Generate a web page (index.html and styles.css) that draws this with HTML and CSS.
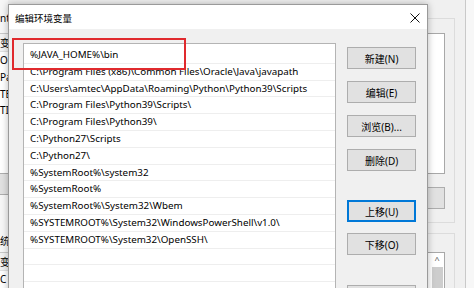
FILE: index.html
```html
<!DOCTYPE html>
<html lang="zh-CN">
<head>
    <meta charset="UTF-8">
    <meta name="viewport" content="width=device-width, initial-scale=1.0">
    <title>编辑环境变量</title>
    <link rel="stylesheet" href="styles.css">
</head>
<body>

<div class="desk">
    <!-- background window, left edge -->
    <div class="bg-left">
        <div class="bl-top">nt</div>
        <div class="bl-list">
            <div class="bl-head">变</div>
            <div class="bl-row">O</div>
            <div class="bl-row">Pa</div>
            <div class="bl-row">TE</div>
            <div class="bl-row">TI</div>
        </div>
        <div class="bl-btn"></div>
        <div class="bl-label">统</div>
        <div class="bl-list bl-list2">
            <div class="bl-head">变</div>
            <div class="bl-row">C</div>
        </div>
    </div>

    <!-- the dialog -->
    <div class="dialog">
        <div class="titlebar">
            <span class="title">编辑环境变量</span>
            <svg class="close" width="10" height="10" viewBox="0 0 10 10">
                <path d="M0.5 0.5 L9.5 9.5 M9.5 0.5 L0.5 9.5" stroke="#111" stroke-width="1" fill="none"/>
            </svg>
        </div>
        <div class="content">
            <div class="list" id="pathList"></div>
            <div class="buttons">
                <div class="btn-group">
                    <div class="btn">新建(N)</div>
                    <div class="btn">编辑(E)</div>
                    <div class="btn">浏览(B)...</div>
                    <div class="btn">删除(D)</div>
                </div>
                <div class="btn-group group-move">
                    <div class="btn focused">上移(U)</div>
                    <div class="btn">下移(O)</div>
                </div>
                <div class="btn-group group-text">
                    <div class="btn">编辑文本(T)...</div>
                </div>
            </div>
        </div>
    </div>

    <!-- background window, right edge -->
    <div class="bg-right">
        <div class="br-main">
            <div class="frame frame1">
                <div class="br-list"></div>
                <div class="br-btn"></div>
            </div>
            <div class="frame frame2">
                <div class="br-scroll">
                    <span class="arrow">^</span>
                    <div class="thumb"></div>
                </div>
            </div>
        </div>
        <div class="br-edge"></div>
    </div>

    <div class="mark"></div>
</div>

<script>
    const paths = [
        "%JAVA_HOME%\\bin",
        "C:\\Program Files (x86)\\Common Files\\Oracle\\Java\\javapath",
        "C:\\Users\\amtec\\AppData\\Roaming\\Python\\Python39\\Scripts",
        "C:\\Program Files\\Python39\\Scripts\\",
        "C:\\Program Files\\Python39\\",
        "C:\\Python27\\Scripts",
        "C:\\Python27\\",
        "%SystemRoot%\\system32",
        "%SystemRoot%",
        "%SystemRoot%\\System32\\Wbem",
        "%SYSTEMROOT%\\System32\\WindowsPowerShell\\v1.0\\",
        "%SYSTEMROOT%\\System32\\OpenSSH\\",
        "", "", ""
    ];

    const list = document.getElementById("pathList");
    paths.forEach(p => {
        const row = document.createElement("div");
        row.className = "row";
        row.textContent = p;
        list.appendChild(row);
    });
</script>

</body>
</html>
```

FILE: styles.css
```css
body {
    margin: 0;
    padding: 0;
    font-family: 'Noto Sans', 'Noto Sans CJK SC', sans-serif;
    color: #000;
    background-color: #f0f0f0;
}
.desk {
    position: relative;
    display: flex;
    width: 474px;
    height: 288px;
    overflow: hidden;
}

/* left strip of the window behind */
.bg-left {
    width: 8px;
    flex-shrink: 0;
    overflow: hidden;
    background-color: #f7f7f7;
    font-size: 10px;
    white-space: nowrap;
}
.bl-top {
    height: 33px;
    line-height: 36px;
    text-align: right;
}
.bl-list {
    height: 139px;
    background-color: #fff;
    border-top: 1px solid #c8c8c8;
}
.bl-head {
    height: 17px;
    line-height: 18px;
    background-color: #f2f2f2;
    border-bottom: 1px solid #e0e0e0;
    font-family: 'Noto Sans CJK SC', sans-serif;
    font-size: 10px;
}
.bl-row {
    height: 16.8px;
    line-height: 16.8px;
}
.bl-btn {
    height: 20px;
    background-color: #e1e1e1;
    border-top: 1px solid #adadad;
    border-bottom: 1px solid #adadad;
}
.bl-label {
    height: 57px;
    line-height: 32px;
    padding-top: 30px;
    box-sizing: border-box;
    font-family: 'Noto Sans CJK SC', sans-serif;
    font-size: 10px;
}
.bl-list2 {
    height: 40px;
}

/* dialog */
.dialog {
    position: relative;
    z-index: 1;
    width: 420px;
    height: 300px;
    flex-shrink: 0;
    margin-top: 4px;
    box-sizing: border-box;
    border: 1px solid #9a9a9a;
    background-color: #f0f0f0;
    box-shadow: 0 0 7px rgba(0, 0, 0, 0.28);
}
.titlebar {
    height: 24px;
    display: flex;
    justify-content: space-between;
    align-items: center;
    padding: 0 7px 0 6px;
    background-color: #fff;
}
.title {
    font-family: 'Noto Sans CJK SC', sans-serif;
    font-size: 9.5px;
    padding-top: 1px;
}
.close {
    margin-top: 1px;
}
.content {
    display: flex;
    gap: 11px;
    padding: 14px 11px 0 14px;
}
.list {
    width: 314px;
    height: 260px;
    box-sizing: border-box;
    border: 1px solid #b4b4b4;
    background-color: #fff;
    padding-top: 3px;
    font-size: 9.8px;
}
.row {
    height: 16.8px;
    line-height: 16px;
    padding-left: 6px;
    box-sizing: border-box;
    border-bottom: 1px solid #eeeeee;
    white-space: nowrap;
}
.buttons {
    width: 69px;
    padding-top: 4px;
}
.btn-group {
    display: flex;
    flex-direction: column;
    gap: 12px;
}
.group-move {
    margin-top: 29px;
    gap: 11px;
}
.group-text {
    margin-top: 30px;
}
.btn {
    height: 22px;
    box-sizing: border-box;
    border: 1px solid #adadad;
    background-color: #e1e1e1;
    display: flex;
    align-items: center;
    justify-content: center;
    font-size: 10px;
    white-space: nowrap;
}
.btn.focused {
    border-color: #0078d7;
    box-shadow: inset 0 0 0 1px #0078d7;
}

/* right strip of the window behind */
.bg-right {
    flex: 1;
    display: flex;
}
.br-main {
    width: 37px;
    border-right: 1px solid #c9c9c9;
}
.frame {
    width: 27px;
    box-sizing: border-box;
    border-top: 1px solid #dcdcdc;
    border-right: 1px solid #dcdcdc;
}
.frame1 {
    margin-top: 18px;
    height: 205px;
    border-bottom: 1px solid #dcdcdc;
    padding-top: 14px;
}
.frame2 {
    margin-top: 10px;
    height: 60px;
    padding-top: 18px;
}
.br-list {
    width: 17px;
    height: 141px;
    box-sizing: border-box;
    border: 1px solid #a8a8a8;
    border-left: none;
    background-color: #fff;
}
.br-btn {
    width: 17px;
    height: 22px;
    margin-top: 13px;
    box-sizing: border-box;
    border: 1px solid #adadad;
    border-left: none;
    background-color: #e1e1e1;
}
.br-scroll {
    width: 17px;
    height: 50px;
    box-sizing: border-box;
    border: 1px solid #a8a8a8;
    border-left: none;
    background-color: #fff;
    display: flex;
    flex-direction: column;
    align-items: center;
}
.arrow {
    font-size: 9px;
    line-height: 14px;
    color: #555;
    padding-left: 2px;
}
.thumb {
    width: 11px;
    height: 30px;
    margin-left: 2px;
    background-color: #cdcdcd;
}
.br-edge {
    flex: 1;
    background-color: #f7f7f7;
}

/* red annotation box */
.mark {
    position: absolute;
    z-index: 2;
    left: 12px;
    top: 38px;
    width: 174px;
    height: 32px;
    box-sizing: border-box;
    border: 2px solid #e02a2e;
}
```
